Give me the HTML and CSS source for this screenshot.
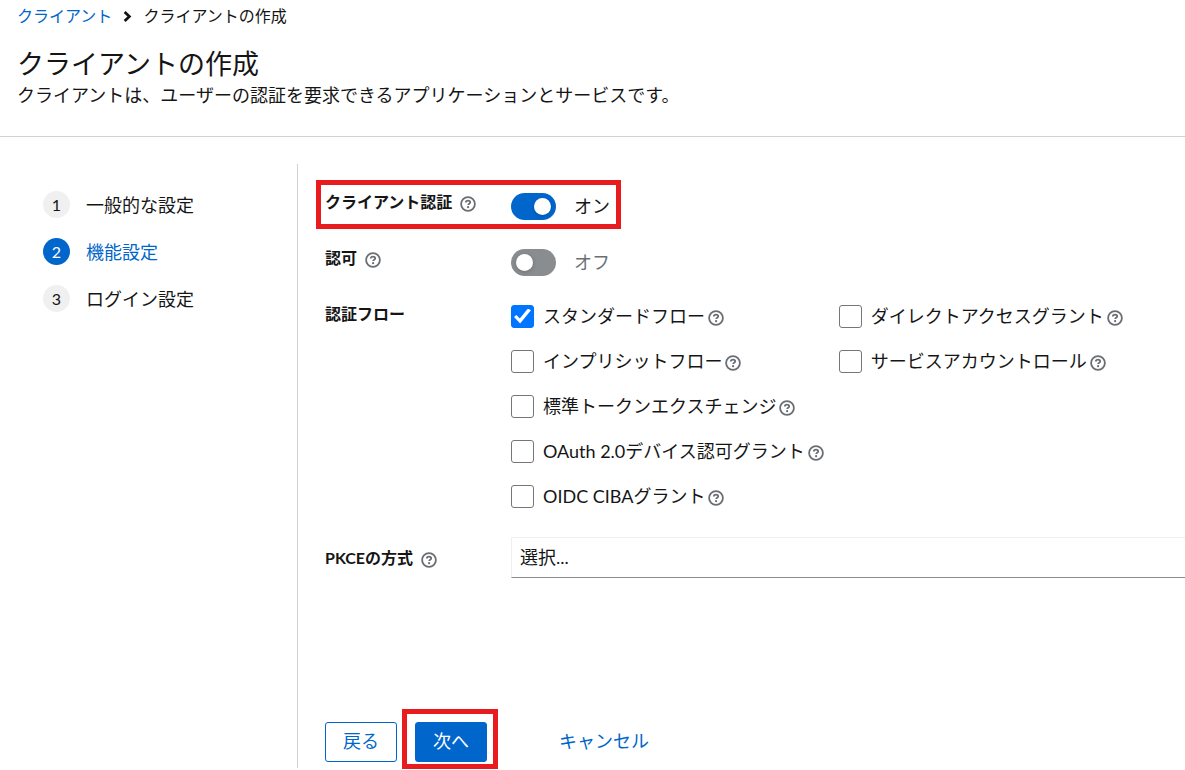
FILE: index.html
```html
<!DOCTYPE html>
<html lang="ja">
<head>
<meta charset="utf-8">
<meta name="viewport" content="width=device-width, initial-scale=1">
<title>クライアントの作成</title>
<link rel="stylesheet" href="styles.css">
</head>
<body>
<svg width="0" height="0" class="sprite" aria-hidden="true">
  <symbol id="help" viewBox="0 0 16 16">
    <circle cx="8" cy="8" r="6.9" fill="none" stroke="currentColor" stroke-width="1.8"/>
    <path d="M5.8 6.5C5.9 5.2 6.8 4.7 8 4.7c1.3 0 2.2.6 2.2 1.7 0 1.3-2 1.4-2 2.6" fill="none" stroke="currentColor" stroke-width="1.8"/>
    <circle cx="8.1" cy="11.2" r="1.1" fill="currentColor"/>
  </symbol>
</svg>
<header class="page-header">
  <nav class="breadcrumb" aria-label="パンくずリスト">
    <a href="#clients">クライアント</a>
    <svg class="chevron" viewBox="0 0 8 10" aria-hidden="true"><path d="M1.4 .9 5.7 5 1.4 9.1" fill="none" stroke="currentColor" stroke-width="2.5"/></svg>
    <span aria-current="page">クライアントの作成</span>
  </nav>
  <h1 class="title">クライアントの作成</h1>
  <p class="description">クライアントは、ユーザーの認証を要求できるアプリケーションとサービスです。</p>
</header>
<main class="wizard">
  <nav class="steps" aria-label="手順">
    <a class="step" href="#general"><span class="step-number">1</span>一般的な設定</a>
    <a class="step step-current" href="#capability" aria-current="step"><span class="step-number">2</span>機能設定</a>
    <a class="step" href="#login"><span class="step-number">3</span>ログイン設定</a>
  </nav>
  <form class="panel">
    <div class="row highlight highlight-row">
      <div class="row-label"><label for="client-auth">クライアント認証</label><button type="button" class="help" aria-label="ヘルプ"><svg><use href="#help"/></svg></button></div>
      <div class="switch-field"><input class="switch" type="checkbox" role="switch" id="client-auth" checked><label for="client-auth">オン</label></div>
    </div>
    <div class="row">
      <div class="row-label"><label for="authz">認可</label><button type="button" class="help" aria-label="ヘルプ"><svg><use href="#help"/></svg></button></div>
      <div class="switch-field switch-off"><input class="switch" type="checkbox" role="switch" id="authz"><label for="authz">オフ</label></div>
    </div>
    <div class="row" role="group" aria-labelledby="flow-label">
      <div class="row-label"><span id="flow-label">認証フロー</span></div>
      <div class="flows">
        <div class="check"><input type="checkbox" id="standard" checked><label for="standard">スタンダードフロー</label><button type="button" class="help" aria-label="ヘルプ"><svg><use href="#help"/></svg></button></div>
        <div class="check"><input type="checkbox" id="direct"><label for="direct">ダイレクトアクセスグラント</label><button type="button" class="help" aria-label="ヘルプ"><svg><use href="#help"/></svg></button></div>
        <div class="check"><input type="checkbox" id="implicit"><label for="implicit">インプリシットフロー</label><button type="button" class="help" aria-label="ヘルプ"><svg><use href="#help"/></svg></button></div>
        <div class="check"><input type="checkbox" id="service"><label for="service">サービスアカウントロール</label><button type="button" class="help" aria-label="ヘルプ"><svg><use href="#help"/></svg></button></div>
        <div class="check check-first"><input type="checkbox" id="exchange"><label for="exchange">標準トークンエクスチェンジ</label><button type="button" class="help" aria-label="ヘルプ"><svg><use href="#help"/></svg></button></div>
        <div class="check check-first"><input type="checkbox" id="device"><label for="device">OAuth 2.0デバイス認可グラント</label><button type="button" class="help" aria-label="ヘルプ"><svg><use href="#help"/></svg></button></div>
        <div class="check check-first"><input type="checkbox" id="ciba"><label for="ciba">OIDC CIBAグラント</label><button type="button" class="help" aria-label="ヘルプ"><svg><use href="#help"/></svg></button></div>
      </div>
    </div>
    <div class="row row-select">
      <div class="row-label"><label for="pkce">PKCEの方式</label><button type="button" class="help" aria-label="ヘルプ"><svg><use href="#help"/></svg></button></div>
      <select class="select" id="pkce"><option>選択...</option><option>S256</option><option>plain</option></select>
    </div>
    <div class="actions">
      <button type="button" class="button button-secondary">戻る</button>
      <span class="highlight highlight-button"><button type="submit" class="button button-primary">次へ</button></span>
      <button type="button" class="button button-link">キャンセル</button>
    </div>
  </form>
</main>
</body>
</html>
```
FILE: styles.css
```css
*,
*::before,
*::after {
  box-sizing: border-box;
}

body {
  margin: 0;
  min-height: 100vh;
  display: flex;
  flex-direction: column;
  overflow-x: hidden;
  background: #fff;
  color: #151515;
  font: 18px/28px Lato, "Noto Sans CJK JP", sans-serif;
}

a {
  color: #06c;
  text-decoration: none;
}

button,
select {
  font: inherit;
}

input {
  margin: 0;
}

.sprite {
  position: absolute;
}

.page-header {
  padding: 4px 17px 26px;
  border-bottom: 1px solid #d2d2d2;
}

.breadcrumb {
  display: flex;
  align-items: center;
  gap: 11px;
  font-size: 16px;
  line-height: 24px;
}

.chevron {
  width: 9px;
  height: 11px;
}

.title {
  margin: 18px 0 0;
  font-size: 27px;
  font-weight: 400;
  line-height: 35px;
}

.description {
  margin: 0;
  line-height: 29px;
}

.wizard {
  flex: 1;
  display: flex;
  padding: 27px 0 2px;
}

.steps {
  width: 298px;
  flex: none;
  display: flex;
  flex-direction: column;
  gap: 18px;
  padding: 27px 16px 27px 43px;
  border-right: 1px solid #d2d2d2;
}

.step {
  display: flex;
  align-items: flex-start;
  gap: 16px;
  line-height: 29px;
  color: #151515;
}

.step-number {
  width: 27px;
  height: 27px;
  border-radius: 50%;
  background: #f0f0f0;
  font-size: 16px;
  line-height: 27px;
  text-align: center;
}

.step-current {
  color: #06c;
}

.step-current .step-number {
  background: #06c;
  color: #fff;
}

.panel {
  flex: 1;
  min-width: 0;
  display: flex;
  flex-direction: column;
  gap: 24px;
  padding: 26px 0 6px 27px;
}

.row {
  display: grid;
  grid-template-columns: 186px 1fr;
  align-items: start;
}

.row-label {
  display: flex;
  align-items: center;
  gap: 8px;
  font-size: 16px;
  font-weight: 700;
  line-height: 24px;
}

.row-select {
  align-items: center;
  margin-top: 3px;
}

.help {
  display: flex;
  padding: 4px 0 0;
  border: 0;
  background: none;
  color: #6a6e73;
}

.help svg {
  width: 16px;
  height: 16px;
}

.switch-field {
  display: flex;
  align-items: center;
  gap: 18px;
  height: 32px;
}

.switch-off {
  color: #6a6e73;
}

.switch {
  appearance: none;
  display: flex;
  align-items: center;
  width: 45px;
  height: 27px;
  padding: 0 5px;
  border-radius: 14px;
  background: #8a8d90;
}

.switch::before {
  content: "";
  width: 17px;
  height: 17px;
  border-radius: 50%;
  background: #fff;
  box-shadow: 0 1px 4px rgba(3, 3, 3, 0.2);
}

.switch:checked {
  justify-content: flex-end;
  background: #06c;
}

.flows {
  display: grid;
  grid-template-columns: max-content 1fr;
  gap: 17px 15px;
}

.check {
  display: flex;
  align-items: center;
  white-space: nowrap;
}

.check-first {
  grid-column: 1;
}

.check input {
  appearance: none;
  display: grid;
  place-items: center;
  width: 23px;
  height: 23px;
  margin-right: 9px;
  border: 1px solid #767676;
  border-radius: 3px;
  background: #fff;
}

.check input:checked {
  border-color: #0075ff;
  background: #0075ff;
}

.check input:checked::before {
  content: "";
  width: 17px;
  height: 15px;
  background: #fff;
  clip-path: polygon(0 56%, 14% 43%, 34% 66%, 82% 0, 100% 12%, 36% 100%);
}

.check .help {
  margin-left: 3px;
}

.select {
  appearance: none;
  width: 100%;
  height: 41px;
  padding: 0 8px 2px;
  border: 1px solid #f0f0f0;
  border-right: 0;
  border-bottom-color: #8a8d90;
  border-radius: 0;
  background: #fff;
  color: #151515;
}

.actions {
  display: flex;
  gap: 18px;
  margin-top: auto;
}

.button {
  height: 40px;
  padding: 0 17px 2px;
  border: 1px solid #06c;
  border-radius: 3px;
  background: #fff;
  color: #06c;
  line-height: 27px;
}

.button-primary {
  background: #06c;
  color: #fff;
}

.button-link {
  margin-left: 36px;
  border-color: transparent;
  background: none;
}

.highlight {
  position: relative;
}

.highlight::after {
  content: "";
  position: absolute;
  border: 5px solid #e81c1f;
  pointer-events: none;
}

.highlight-row::after {
  top: -10px;
  left: -9px;
  width: 305px;
  height: 49px;
}

.highlight-button::after {
  inset: -13px -11px -7px -13px;
}
```
